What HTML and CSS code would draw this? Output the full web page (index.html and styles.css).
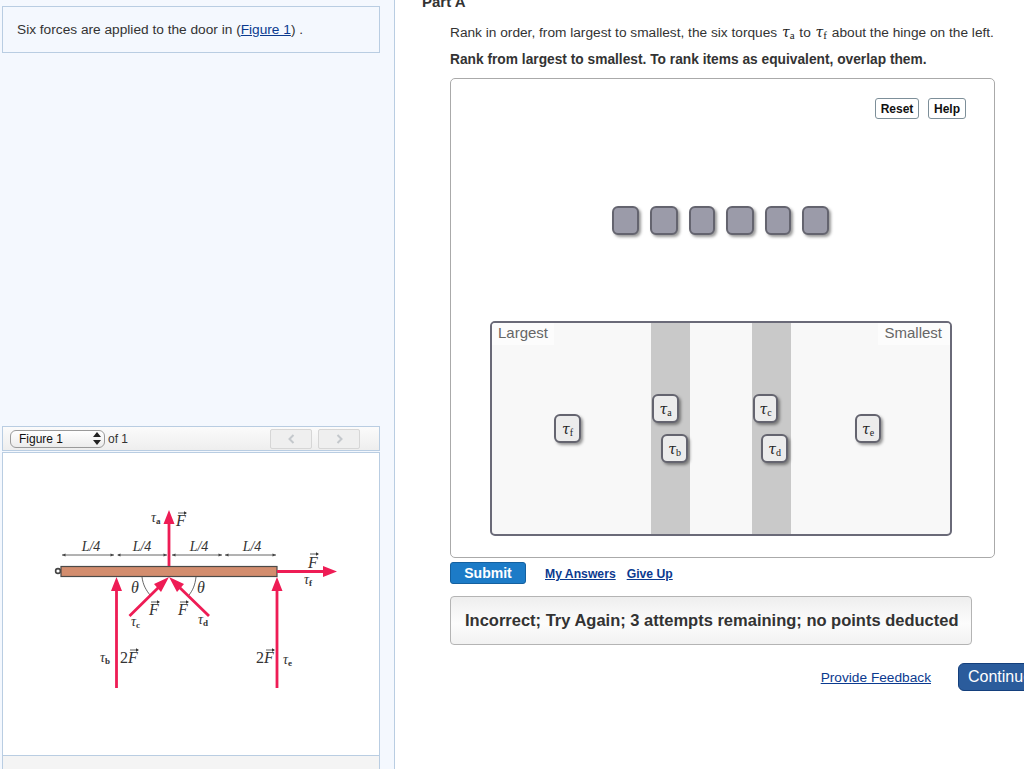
FILE: index.html
```html
<!DOCTYPE html>
<html lang="en">
<head>
<meta charset="utf-8">
<title>Part A</title>
<link rel="stylesheet" href="styles.css">
</head>
<body>
<div class="page">
  <aside class="left">
    <div class="intro">Six forces are applied to the door in (<a href="#">Figure 1</a>) .</div>
    <div class="figbar">
      <div class="picker"><span>Figure 1</span>
        <svg class="updown" width="8" height="13" viewBox="0 0 8 13"><path d="M4 0 8 5H0zM4 13 0 8h8z" fill="#222"/></svg>
      </div>
      <span class="of">of 1</span>
      <div class="navs">
        <div class="navbtn"><svg width="7" height="10" viewBox="0 0 7 10"><path d="M5.500 1 1.500 5l4 4" fill="none" stroke="#c4c8cc" stroke-width="2"/></svg></div>
        <div class="navbtn"><svg width="7" height="10" viewBox="0 0 7 10"><path d="M1.500 1l4 4-4 4" fill="none" stroke="#c4c8cc" stroke-width="2"/></svg></div>
      </div>
    </div>
    <div class="figure">
      <svg class="diagram" width="376" height="302" viewBox="3 453 376 302">
        <defs>
          <g id="vec"><path d="M-4 0H3.500" stroke="#333" stroke-width=".8" fill="none"/><path d="M5 0 2 -1.800V1.800z" fill="#333"/></g>
          <g id="dimL"><path d="M0 0 3.500 -1.500V1.500z" fill="#444"/></g>
          <g id="dimR"><path d="M0 0 -3.500 -1.500V1.500z" fill="#444"/></g>
        </defs>
        <g stroke="#555" stroke-width=".9" fill="none">
          <path d="M62 555H114M118 555H167M172 555H222M225 555H276"/>
          <path d="M142 577C143 585 146 590 150 595M196 577C195 585 193 590 189 595"/>
        </g>
        <g><use href="#dimL" x="62" y="555"/><use href="#dimR" x="114" y="555"/><use href="#dimL" x="117" y="555"/><use href="#dimR" x="167" y="555"/><use href="#dimL" x="172" y="555"/><use href="#dimR" x="222" y="555"/><use href="#dimL" x="225" y="555"/><use href="#dimR" x="276" y="555"/></g>
        <circle cx="58" cy="571" r="2.400" fill="#fff" stroke="#444" stroke-width="1.600"/>
        <rect x="61" y="566.500" width="216" height="10" fill="#d38d6e" stroke="#4c4a48" stroke-width="1.200"/>
        <g stroke="#ee1c55" stroke-width="2.800" fill="none">
          <path d="M169 566V520M116.500 688V588M277 688V588M277 571.500H326M129.500 616 161 585M209 616 177 585"/>
        </g>
        <g fill="#ee1c55">
          <path d="M169 510 174.500 524H163.500zM116.500 577 122 591H111zM277 577 282.500 591H271.500zM337 571.500 323 566V577zM169 577 161 592 154 584zM169 577 184 584 177 592z"/>
        </g>
        <g class="dlabel">
          <text x="91" y="551" text-anchor="middle">L/4</text>
          <text x="142" y="551" text-anchor="middle">L/4</text>
          <text x="199" y="551" text-anchor="middle">L/4</text>
          <text x="252" y="551" text-anchor="middle">L/4</text>
          <text class="big" x="135" y="593" text-anchor="middle">θ</text>
          <text class="big" x="201" y="593" text-anchor="middle">θ</text>
          <text class="big" x="181" y="526" text-anchor="middle">F</text>
          <text class="big" x="313" y="568" text-anchor="middle">F</text>
          <text class="big" x="154" y="615" text-anchor="middle">F</text>
          <text class="big" x="183" y="615" text-anchor="middle">F</text>
          <text class="big" x="129" y="663" text-anchor="middle"><tspan class="up">2</tspan>F</text>
          <text class="big" x="265" y="663" text-anchor="middle"><tspan class="up">2</tspan>F</text>
        </g>
        <g>
          <use href="#vec" x="182" y="513"/><use href="#vec" x="314" y="554"/><use href="#vec" x="155" y="602"/><use href="#vec" x="184" y="602"/><use href="#vec" x="134" y="650"/><use href="#vec" x="270" y="650"/>
        </g>
        <g class="tlabel">
          <text x="151" y="522">τ<tspan class="subs" dy="2">a</tspan></text>
          <text x="304" y="584">τ<tspan class="subs" dy="2">f</tspan></text>
          <text x="131" y="626">τ<tspan class="subs" dy="2">c</tspan></text>
          <text x="198" y="624">τ<tspan class="subs" dy="2">d</tspan></text>
          <text x="100" y="662">τ<tspan class="subs" dy="2">b</tspan></text>
          <text x="283" y="664">τ<tspan class="subs" dy="2">e</tspan></text>
        </g>
      </svg>
    </div>
    <div class="figfoot"></div>
  </aside>
  <main class="right">
    <h2 class="part">Part A</h2>
    <div class="content">
      <p class="q">Rank in order, from largest to smallest, the six torques <span class="tau inl">τ<sub>a</sub></span> to <span class="tau inl">τ<sub>f</sub></span> about the hinge on the left.</p>
      <p class="instr">Rank from largest to smallest. To rank items as equivalent, overlap them.</p>
      <section class="widget">
        <div class="tools"><button class="tool reset">Reset</button><button class="tool help">Help</button></div>
        <div class="slots">
          <div class="slot w27"></div><div class="slot w28"></div><div class="slot w26"></div><div class="slot w28"></div><div class="slot w26"></div><div class="slot w27"></div>
        </div>
        <div class="rank">
          <div class="band band1"></div>
          <div class="band band2"></div>
          <span class="end largest">Largest</span>
          <span class="end smallest">Smallest</span>
          <div class="tile tf"><span class="tau">τ<sub>f</sub></span></div>
          <div class="tile ta"><span class="tau">τ<sub>a</sub></span></div>
          <div class="tile tb"><span class="tau">τ<sub>b</sub></span></div>
          <div class="tile tc"><span class="tau">τ<sub>c</sub></span></div>
          <div class="tile td"><span class="tau">τ<sub>d</sub></span></div>
          <div class="tile te"><span class="tau">τ<sub>e</sub></span></div>
        </div>
      </section>
      <div class="actions">
        <button class="submit">Submit</button>
        <a class="act first" href="#">My Answers</a>
        <a class="act" href="#">Give Up</a>
      </div>
      <div class="feedback">Incorrect; Try Again; 3 attempts remaining; no points deducted</div>
      <div class="bottom">
        <a class="provide" href="#">Provide Feedback</a>
        <button class="continue">Continue</button>
      </div>
    </div>
  </main>
</div>
</body>
</html>
```

FILE: styles.css
```css
* { box-sizing: border-box; }
html, body { margin: 0; height: 769px; overflow: hidden; background: #fff; }
body { font-family: "Liberation Sans", Arial, sans-serif; font-size: 13.7px; color: #333; }
a { color: #0b3a8f; }

.page { display: flex; width: 1024px; height: 769px; overflow: hidden; }

.left {
  flex: 0 0 395px;
  height: 769px;
  padding: 6px 14px 0 2px;
  background: #f4f8fe;
  border-right: 1px solid #b9cde2;
}
.intro {
  height: 47px;
  padding: 15px 14px 0;
  border: 1px solid #b9cde2;
  line-height: 16px;
}
.figbar {
  display: flex;
  align-items: center;
  height: 25px;
  margin-top: 373px;
  padding: 0 19px 0 7px;
  border: 1px solid #b9cde2;
  background: linear-gradient(#fbfbfb, #eeeeee);
  font-size: 12px;
}
.picker {
  display: flex;
  align-items: center;
  justify-content: space-between;
  width: 95px;
  height: 18px;
  padding: 0 3px 0 8px;
  border: 1px solid #9a9a9a;
  border-radius: 6px;
  background: linear-gradient(#fff, #ececec);
  color: #111;
}
.of { margin-left: 3px; color: #333; }
.navs { display: flex; gap: 6px; margin-left: auto; }
.navbtn {
  display: flex;
  align-items: center;
  justify-content: center;
  width: 42px;
  height: 20px;
  border: 1px solid #d6d6d6;
  border-radius: 2px;
  background: #efefef;
}
.figure {
  height: 303px;
  margin-top: 1px;
  border: 1px solid #b9cde2;
  border-bottom: 0;
  background: #fff;
}
.diagram { display: block; }
.dlabel text { font: italic 14px "Liberation Serif", serif; fill: #333; }
.dlabel text.big { font-size: 16px; }
.dlabel .up { font-style: normal; }
.tlabel text { font: italic 14px "Liberation Serif", serif; fill: #333; }
.tlabel .subs { font-size: 9px; font-style: normal; font-weight: bold; }
.figfoot {
  height: 14px;
  border: 1px solid #b9cde2;
  border-bottom: 0;
  background: #f4f4f4;
}

.right { flex: 1 1 auto; min-width: 0; padding-left: 27px; }
.part {
  margin: -6px 0 0;
  height: 16px;
  font-size: 15px;
  line-height: 16px;
  font-weight: bold;
  color: #333;
}
.content { padding-left: 28px; width: 629px; }
.q { margin: 0; padding-top: 12px; height: 35px; line-height: 20px; white-space: nowrap; }
.instr { margin: 0; padding-top: 7px; height: 33px; line-height: 16px; font-size: 13.75px; font-weight: bold; white-space: nowrap; }
.tau { font-family: "DejaVu Serif", "Liberation Serif", serif; font-style: italic; font-size: 14px; color: #222; }
.tau sub { font-style: normal; font-size: 10px; line-height: 0; vertical-align: -2px; font-family: "Liberation Serif", serif; }
.inl { margin: 0 1px; }
.inl sub { font-size: 11px; }

.widget {
  width: 545px;
  height: 480px;
  padding: 19px 28px 0 39px;
  border: 1px solid #aaa;
  border-radius: 5px;
  background: #fff;
}
.tools { display: flex; justify-content: flex-end; gap: 9px; }
.tool {
  height: 21px;
  padding: 0;
  border: 1px solid #7d8f99;
  border-radius: 3px;
  background: #fff;
  font: bold 12px "Liberation Sans", sans-serif;
  color: #111;
}
.reset { width: 44px; }
.help { width: 38px; }

.slots { display: flex; gap: 11px; margin: 87px 0 0 122px; }
.slot {
  height: 29px;
  border: 2px solid #64646f;
  border-radius: 6px;
  background: #9b9ba9;
  box-shadow: 2px 2px 3px rgba(0, 0, 0, .4);
}
.w26 { width: 26px; }
.w27 { width: 27px; }
.w28 { width: 28px; }

.rank {
  position: relative;
  width: 462px;
  height: 215px;
  margin: 86px 0 0;
  border: 2px solid #6a6a78;
  border-radius: 5px;
  background: #f8f8f8;
  overflow: hidden;
}
.band { position: absolute; top: 0; bottom: 0; width: 39px; background: #c9c9c9; }
.band1 { left: 159px; }
.band2 { left: 260px; }
.end {
  position: absolute;
  top: 0;
  height: 22px;
  padding: 0 6px;
  line-height: 20px;
  font-size: 15px;
  color: #666;
  background: #fcfcfc;
}
.largest { left: 0; }
.smallest { right: 0; padding-right: 8px; }

.tile {
  position: absolute;
  display: flex;
  align-items: center;
  justify-content: center;
  height: 29px;
  border: 2px solid #64646f;
  border-radius: 6px;
  background: #ececec;
  box-shadow: 2px 2px 3px rgba(0, 0, 0, .4);
}
.tf { left: 62px; top: 91px; width: 27px; }
.ta { left: 160px; top: 71px; width: 27px; }
.tb { left: 169px; top: 111px; width: 27px; }
.tc { left: 261px; top: 71px; width: 25px; }
.td { left: 269px; top: 111px; width: 27px; }
.te { left: 363px; top: 91px; width: 26px; }

.actions { display: flex; align-items: center; margin-top: 4px; height: 22px; }
.submit {
  width: 76px;
  height: 22px;
  padding: 0;
  border: 1px solid #14609f;
  border-radius: 3px;
  background: #1c7bc7;
  color: #fff;
  font: bold 14px "Liberation Sans", sans-serif;
}
.act { margin-left: 11px; padding-top: 2px; font-size: 12.200px; font-weight: bold; }
.act.first { margin-left: 19px; }

.feedback {
  width: 522px;
  height: 49px;
  margin-top: 12px;
  padding-left: 14px;
  border: 1px solid #b4b4b4;
  border-radius: 4px;
  background: linear-gradient(#eeeeee, #fcfcfc 55%, #f2f2f2);
  font-size: 16.500px;
  font-weight: bold;
  line-height: 47px;
  color: #333;
  white-space: nowrap;
}
.bottom { display: flex; align-items: center; justify-content: flex-end; height: 28px; margin-top: 18px; }
.provide { margin-right: 27px; font-size: 13.700px; }
.continue {
  flex: 0 0 80px;
  height: 28px;
  margin-right: 13px;
  padding: 0 0 0 9px;
  border: 1px solid #143f7c;
  border-radius: 6px;
  background: #2b5c9c;
  color: #fff;
  font: 16px "Liberation Sans", sans-serif;
  text-align: left;
}
```
